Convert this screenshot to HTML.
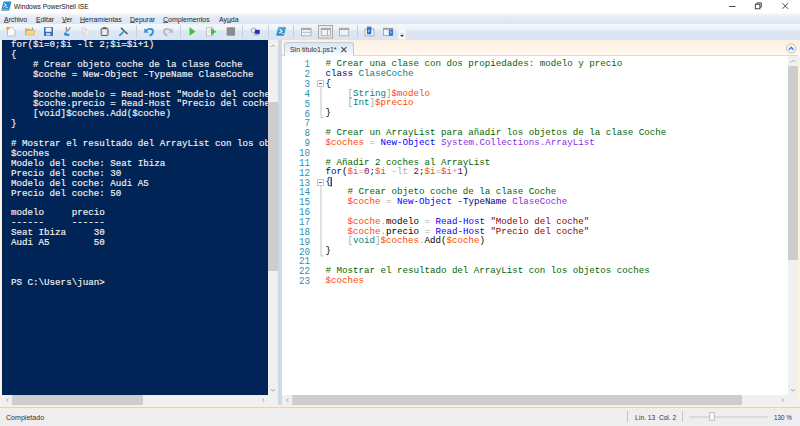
<!DOCTYPE html>
<html><head><meta charset="utf-8">
<style>
*{margin:0;padding:0;box-sizing:border-box}
html,body{width:800px;height:426px;overflow:hidden;background:#efefef;font-family:"Liberation Sans",sans-serif}
.a{position:absolute}
#title{left:0;top:0;width:800px;height:13px;background:#fff}
#ttext{left:13.5px;top:1px;font-size:7.6px;color:#111;white-space:nowrap;line-height:12px;transform:scaleX(.87);transform-origin:0 0}
#menu{left:0;top:13px;width:800px;height:11px;background:linear-gradient(#f8fafd,#e3ebf6 40%,#dbe6f4)}
.mi{position:absolute;top:1px;font-size:7.8px;color:#1e1e1e;line-height:11px;white-space:nowrap;transform:scaleX(.89);transform-origin:0 0}
.mi u{text-decoration:underline;text-underline-offset:0px;text-decoration-color:#6a6a6a;text-decoration-thickness:1px}
#tool{left:0;top:24px;width:800px;height:16px;background:linear-gradient(#f3f7fb,#eff4fa 30%,#dde7f4 45%,#dae5f3)}
.sep{position:absolute;top:27px;width:1px;height:11px;background:#c9d3df;border-right:1px solid #fff}
#con{left:2px;top:40px;width:266px;height:354.5px;background:#012456;overflow:hidden}
#contxt{position:absolute;left:9px;top:0;font-family:"Liberation Mono",monospace;font-size:9.2px;line-height:9.91px;color:#f4f4f4;white-space:pre;-webkit-text-stroke:0.15px #f4f4f4}
#lstrip{left:0;top:40px;width:2px;height:367px;background:#fdf1e3}
#cvs{left:268px;top:40px;width:10px;height:354px;background:#f0f0f0}
#cvthumb{left:268px;top:102px;width:10px;height:169px;background:#cdcdcd}
#chs{left:2px;top:394.5px;width:276px;height:10.5px;background:#f0f0f0}
#chthumb{left:12px;top:394.5px;width:131px;height:10.5px;background:#cdcdcd}
#split{left:278px;top:40px;width:4px;height:367px;background:#c7daf0;border-left:1px solid #d5d5d5;border-right:1px solid #d9d9d9}
#edtop{left:282px;top:40px;width:518px;height:16px;background:linear-gradient(#fdf0e1,#fff8f0)}
#edline{left:282px;top:55px;width:516px;height:1px;background:#dadada}
#ed{left:282px;top:56px;width:506px;height:338.5px;background:#fff;overflow:hidden}
#edtxt{position:absolute;left:43.5px;top:3px;font-family:"Liberation Mono",monospace;font-size:9.17px;line-height:9.86px;color:#000;white-space:pre}
#lnum{position:absolute;left:0;width:28px;top:4.3px;text-align:right;font-family:"Liberation Mono",monospace;font-size:11px;transform:scaleX(.84);transform-origin:100% 0;line-height:9.86px;color:#2b91af;white-space:pre}
#evs{left:788px;top:56px;width:10px;height:338px;background:#f0f0f0}
#evthumb{left:788px;top:66px;width:10px;height:194px;background:#cdcdcd}
#ehs{left:282px;top:394.5px;width:516px;height:10.5px;background:#f0f0f0}
#ehthumb{left:292px;top:394.5px;width:450px;height:10.5px;background:#cdcdcd}
#rstrip{left:798px;top:40px;width:2px;height:367px;background:#fdf1e3}
#bstrip{left:0;top:405px;width:800px;height:2px;background:#fdefdf}
#status{left:0;top:407px;width:800px;height:19px;background:#eeeeee;border-top:1px solid #d6d3d0}
.st{position:absolute;font-size:7.7px;color:#333;white-space:nowrap;line-height:10px;transform:scaleX(.92);transform-origin:0 0}
.c{color:#006400}.k{color:#00008b}.t{color:#008080}.v{color:#ff4500}.m{color:#0000ff}.p{color:#000080}.s{color:#8b0000}.o{color:#a9a9a9}.n{color:#800080}.g{color:#8a2be2}
#tab{left:284px;top:41.5px;width:70px;height:15px;border:1px solid #c3cad3;border-bottom:none;border-radius:3px 3px 0 0;background:linear-gradient(#dae6f6,#e8f0fa 50%,#fdfeff)}
</style></head><body>
<div id="title" class="a"></div>
<svg class="a" style="left:1px;top:1px" width="11" height="11" viewBox="0 0 11 11">
<path d="M2.5 0.5H10.5L8.5 8.5H0.5Z" fill="#2b8fd0"/>
<path d="M0.6 8.2H8.5L8.3 10H0.2Z" fill="#8aa5b5"/>
<path d="M3 2.3L5.3 4.2L2.5 6" stroke="#fff" stroke-width="1" fill="none"/>
<path d="M4.6 6.3H6.8" stroke="#fff" stroke-width="0.8"/>
</svg>
<div id="ttext" class="a">Windows PowerShell ISE</div>
<svg class="a" style="left:725px;top:0" width="75" height="13">
<path d="M4 6.5H10.5" stroke="#333" stroke-width="0.9"/>
<rect x="30.3" y="4.2" width="4.6" height="4.6" fill="none" stroke="#333" stroke-width="0.9"/>
<path d="M31.9 4.2V2.9H36.3V7.2H34.9" fill="none" stroke="#333" stroke-width="0.9"/>
<path d="M57.5 3.2L63 8.8M63 3.2L57.5 8.8" stroke="#333" stroke-width="0.9"/>
</svg>
<div id="menu" class="a">
<div class="mi" style="left:4px"><u>A</u>rchivo</div>
<div class="mi" style="left:36px"><u>E</u>ditar</div>
<div class="mi" style="left:62px"><u>V</u>er</div>
<div class="mi" style="left:80px"><u>H</u>erramientas</div>
<div class="mi" style="left:130px"><u>D</u>epurar</div>
<div class="mi" style="left:163px"><u>C</u>omplementos</div>
<div class="mi" style="left:218.5px">Ay<u>u</u>da</div>
</div>
<div id="tool" class="a"></div>
<svg class="a" style="left:0;top:22px" width="420" height="18" viewBox="0 22 420 18">
<!-- separators -->
<g fill="#c6cfdb"><rect x="136" y="25.5" width="1" height="12.5"/><rect x="180" y="25.5" width="1" height="12.5"/><rect x="242" y="25.5" width="1" height="12.5"/><rect x="268" y="25.5" width="1" height="12.5"/><rect x="293" y="25.5" width="1" height="12.5"/><rect x="357" y="25.5" width="1" height="12.5"/></g>
<!-- new -->
<path d="M7.5 27.5H12.5L15 30V36H7.5Z" fill="#fafafa" stroke="#b9b9b9" stroke-width="0.9"/>
<circle cx="7.8" cy="28.3" r="1.6" fill="#f5a623"/>
<!-- open -->
<path d="M25 28.5H29L30 29.5H33.5V34.8H25Z" fill="#d9b25a"/>
<path d="M26.5 30.5H35.2L33.8 35H25Z" fill="#f3d78b" stroke="#c9a14a" stroke-width="0.5"/>
<circle cx="32.5" cy="28.5" r="0.9" fill="#4aa3df"/>
<!-- save -->
<rect x="44" y="27" width="9" height="9" rx="0.8" fill="#2f6fb7"/>
<rect x="45.5" y="27.6" width="6" height="4.2" fill="#f2f2f2"/>
<rect x="46" y="33" width="4.5" height="2.6" fill="#c8d3de"/>
<!-- cut -->
<path d="M66.4 27V31.8M70.4 27.3Q68.8 30 66.8 31.6" stroke="#8a9096" stroke-width="1.3" fill="none"/>
<ellipse cx="65.6" cy="34" rx="1.9" ry="1.8" fill="#2d9be6"/>
<ellipse cx="68.1" cy="35" rx="1.6" ry="1.3" fill="#2d9be6"/>
<path d="M65.6 34.2L67.6 34.8" stroke="#1a6fb8" stroke-width="0.7"/>
<!-- copy disabled -->
<path d="M82 27.8H85.5L86.5 28.8V33.5H82Z" fill="#e8ebee" stroke="#c9ced3" stroke-width="0.6"/>
<path d="M85 30.5H88.5L89.5 31.5V36H85Z" fill="#eef0f2" stroke="#c9ced3" stroke-width="0.6"/>
<!-- paste -->
<rect x="101.2" y="28.3" width="6.8" height="7.3" rx="0.8" fill="#cfd3d6" stroke="#5e6266" stroke-width="1"/>
<rect x="102.9" y="27.2" width="3.4" height="1.8" fill="#5e6266"/>
<rect x="102.6" y="30" width="4" height="4.2" fill="#eceeef"/>
<!-- clear -->
<path d="M121 27.8L127.5 34" stroke="#55595e" stroke-width="1.6"/>
<path d="M119.3 35.8L124.6 30.6" stroke="#2a9be0" stroke-width="1.7"/>
<!-- undo -->
<path d="M146 30.5C149 28 153.5 28.5 153 32C152.6 34 151 35.2 149.5 35.6" stroke="#2a92e0" stroke-width="1.8" fill="none"/>
<path d="M144.3 28.3V32.8H148.8Z" fill="#2a92e0"/>
<!-- redo disabled -->
<path d="M171 30.5C168 28 163.5 28.5 164 32C164.4 34 166 35.2 167.5 35.6" stroke="#b8bcbf" stroke-width="1.8" fill="none"/>
<path d="M172.7 28.3V32.8H168.2Z" fill="#b8bcbf"/>
<!-- run -->
<path d="M189.5 27.3L195.5 31.5L189.5 35.7Z" fill="#3bc43b"/>
<!-- run selection -->
<rect x="206.5" y="27.3" width="6.5" height="8.5" fill="#f4f4f4" stroke="#b9bcbf" stroke-width="0.8"/>
<path d="M208 30H211M208 32H211" stroke="#c9cccf" stroke-width="0.6"/>
<path d="M211 28L216.3 31.8L211 35.6Z" fill="#3bc43b"/>
<!-- stop -->
<rect x="226.7" y="27.3" width="8.4" height="8.4" rx="1" fill="#8c8c8c"/>
<!-- remote -->
<circle cx="253.6" cy="30.4" r="2.4" fill="#eef0f2" stroke="#9aa1a8" stroke-width="0.9"/>
<rect x="255" y="30" width="4.6" height="3.8" fill="#1a2fd8" stroke="#3a4a90" stroke-width="0.5"/>
<path d="M253.5 35H259M256.5 34V35" stroke="#9aa0a6" stroke-width="0.8"/>
<!-- PS -->
<defs><linearGradient id="psg" x1="0" y1="0" x2="0" y2="1"><stop offset="0" stop-color="#49a7dc"/><stop offset="1" stop-color="#2a7fbd"/></linearGradient></defs>
<path d="M278.6 27.4H285.6L283.6 35.2H276.6Z" fill="url(#psg)" stroke="url(#psg)" stroke-width="0.8" stroke-linejoin="round"/>
<path d="M279.6 29.2L282 31.2L279.3 33.2" stroke="#fff" stroke-width="1.1" fill="none"/>
<path d="M281.5 33.6H283.6" stroke="#fff" stroke-width="0.9"/>
<!-- layout1 -->
<rect x="301.5" y="28.3" width="9.5" height="7.5" fill="#f2f2f2" stroke="#aaaaaa" stroke-width="0.9"/>
<rect x="301.5" y="28.3" width="9.5" height="1.6" fill="#a3a3a3"/>
<path d="M301.5 32.3H311" stroke="#aaaaaa" stroke-width="0.8"/>
<!-- layout2 selected -->
<rect x="318.5" y="25.5" width="14" height="12.5" fill="#eceff3" stroke="#a6a6a6" stroke-width="1"/>
<rect x="321.3" y="28.3" width="9.2" height="7.5" fill="#f2f2f2" stroke="#aaaaaa" stroke-width="0.9"/>
<rect x="321.3" y="28.3" width="9.2" height="1.6" fill="#a3a3a3"/>
<path d="M327.5 29.5V35.8" stroke="#aaaaaa" stroke-width="0.9"/>
<!-- layout3 -->
<rect x="339.5" y="28.3" width="9.2" height="7.5" fill="#f2f2f2" stroke="#aaaaaa" stroke-width="0.9"/>
<rect x="339.5" y="28.3" width="9.2" height="1.6" fill="#a3a3a3"/>
<!-- icon A -->
<rect x="365" y="29" width="9" height="7" fill="#f4f4f4" stroke="#a0a0a0" stroke-width="0.8"/>
<rect x="367" y="26.8" width="4.3" height="7.5" fill="#2a6fc6"/>
<rect x="367" y="26.8" width="4.3" height="1.2" fill="#6b7b8c"/>
<path d="M368 29.5L369.8 30.8L368 32" stroke="#fff" stroke-width="0.7" fill="none"/>
<!-- icon B -->
<rect x="383.5" y="28.3" width="9.3" height="7.2" fill="#f4f4f4" stroke="#9a9a9a" stroke-width="0.8"/>
<rect x="383.5" y="28.3" width="9.3" height="1.3" fill="#8c8c8c"/>
<rect x="388.8" y="29.6" width="4" height="5.9" fill="#2a6fc6"/>
<path d="M389.8 30.8L391.6 32.3L389.8 33.8" stroke="#fff" stroke-width="0.7" fill="none"/>
<!-- overflow -->
<rect x="398.5" y="24" width="7" height="15.5" fill="#f3f7fc"/>
<path d="M400.3 33.8H403.7" stroke="#999" stroke-width="0.6"/>
<path d="M400 35L402 37L404 35Z" fill="#333"/>
</svg>
<div id="lstrip" class="a"></div>
<div id="rstrip" class="a"></div>
<div id="con" class="a"><div id="contxt">for($i=0;$i -lt 2;$i=$i+1)
{
    # Crear objeto coche de la clase Coche
    $coche = New-Object -TypeName ClaseCoche

    $coche.modelo = Read-Host "Modelo del coche"
    $coche.precio = Read-Host "Precio del coche"
    [void]$coches.Add($coche)
}

# Mostrar el resultado del ArrayList con los objetos coches
$coches
Modelo del coche: Seat Ibiza
Precio del coche: 30
Modelo del coche: Audi A5
Precio del coche: 50

modelo     precio
------     ------
Seat Ibiza     30
Audi A5        50



PS C:\Users\juan&gt;</div></div>
<div id="cvs" class="a"></div>
<div id="cvthumb" class="a"></div>
<div id="chs" class="a"></div>
<div id="chthumb" class="a"></div>
<div id="split" class="a"></div>
<div id="edtop" class="a"></div>
<div id="edline" class="a"></div>
<div id="tab" class="a"></div>
<div class="a" style="left:289.5px;top:45.2px;font-size:7.7px;line-height:10px;color:#2a2a2a;white-space:nowrap;transform:scaleX(.9);transform-origin:0 0">Sin título1.ps1*</div>
<svg class="a" style="left:340px;top:46.2px" width="8" height="8"><path d="M1.3 1.2L6.4 6.2M6.4 1.2L1.3 6.2" stroke="#444" stroke-width="1.1"/></svg>
<div id="ed" class="a">
<div id="lnum">1
2
3
4
5
6
7
8
9
10
11
12
13
14
15
16
17
18
19
20
21
22
23</div>
<div id="edtxt"><span class="c"># Crear una clase con dos propiedades: modelo y precio</span>
<span class="k">class</span> <span class="t">ClaseCoche</span>
{
    <span class="o">[</span><span class="t">String</span><span class="o">]</span><span class="v">$modelo</span>
    <span class="o">[</span><span class="t">Int</span><span class="o">]</span><span class="v">$precio</span>
}

<span class="c"># Crear un ArrayList para añadir los objetos de la clase Coche</span>
<span class="v">$coches</span> <span class="o">=</span> <span class="m">New-Object</span> <span class="g">System.Collections.ArrayList</span>

<span class="c"># Añadir 2 coches al ArrayList</span>
<span class="k">for</span>(<span class="v">$i</span><span class="o">=</span><span class="n">0</span>;<span class="v">$i</span> <span class="o">-lt</span> <span class="n">2</span>;<span class="v">$i</span><span class="o">=</span><span class="v">$i</span><span class="o">+</span><span class="n">1</span>)
{
    <span class="c"># Crear objeto coche de la clase Coche</span>
    <span class="v">$coche</span> <span class="o">=</span> <span class="m">New-Object</span> <span class="p">-TypeName</span> <span class="g">ClaseCoche</span>

    <span class="v">$coche</span><span class="o">.</span>modelo <span class="o">=</span> <span class="m">Read-Host</span> <span class="s">"Modelo del coche"</span>
    <span class="v">$coche</span><span class="o">.</span>precio <span class="o">=</span> <span class="m">Read-Host</span> <span class="s">"Precio del coche"</span>
    <span class="o">[</span><span class="t">void</span><span class="o">]</span><span class="v">$coches</span><span class="o">.</span>Add(<span class="v">$coche</span>)
}

<span class="c"># Mostrar el resultado del ArrayList con los objetos coches</span>
<span class="v">$coches</span></div>
</div>
<svg class="a" style="left:0;top:0" width="800" height="426">
<g fill="none" stroke="#c4c4c4" stroke-width="1">
<rect x="317.5" y="80.5" width="6" height="6" fill="#fff"/>
<path d="M321 87V117.5H323.5"/>
<rect x="317.5" y="179.5" width="6" height="6" fill="#fff"/>
<path d="M321 186V256H323.5"/>
</g>
<path d="M319 83.5H322M319 182.5H322" stroke="#555" stroke-width="0.9"/>
<rect x="330.6" y="177.2" width="1.3" height="9.3" fill="#333"/>
</svg>
<div id="evs" class="a"></div>
<div id="evthumb" class="a"></div>
<div id="ehs" class="a"></div>
<div id="ehthumb" class="a"></div>
<svg class="a" style="left:0;top:0" width="800" height="426">
<g fill="none" stroke="#a2a2a2" stroke-width="0.9">
<path d="M271 47L273 45L275 47"/>
<path d="M271 389L273 391.2L275 389"/>
<path d="M8.3 398.3L6.5 400.2L8.3 402"/>
<path d="M262.3 398.3L264.1 400.2L262.3 402"/>
<path d="M288.5 398.3L286.7 400.2L288.5 402"/>
<path d="M782 398.3L783.8 400.2L782 402"/>
<path d="M791 62.2L793 60.2L795 62.2"/>
<path d="M791 389L793 391.2L795 389"/>
</g>
<circle cx="791.2" cy="48.4" r="4.6" fill="#f7f7f7" stroke="#b5b5b5" stroke-width="0.9"/>
<path d="M789 49.8L791.2 47.3L793.4 49.8" stroke="#3d7fd8" stroke-width="1.5" fill="none"/>
</svg>
<div id="bstrip" class="a"></div>
<div id="status" class="a"></div>
<div class="st" style="left:6px;top:413.3px">Completado</div>
<div class="a" style="left:627px;top:411px;width:1px;height:11px;background:#c4c4c4"></div>
<div class="st" style="left:634.5px;top:413.3px;transform:scaleX(.86)">Lín. 13&nbsp; Col. 2</div>
<div class="a" style="left:682px;top:411px;width:1px;height:11px;background:#c4c4c4"></div>
<div class="a" style="left:689px;top:416px;width:79px;height:1.5px;background:#d9dcdc"></div>
<div class="a" style="left:709px;top:412px;width:5.5px;height:9px;background:#f6f6f6;border:1px solid #c4c4c4;border-radius:1px"></div>
<div class="st" style="left:774px;top:413.3px;transform:scaleX(.82)">130 %</div>
</body></html>
